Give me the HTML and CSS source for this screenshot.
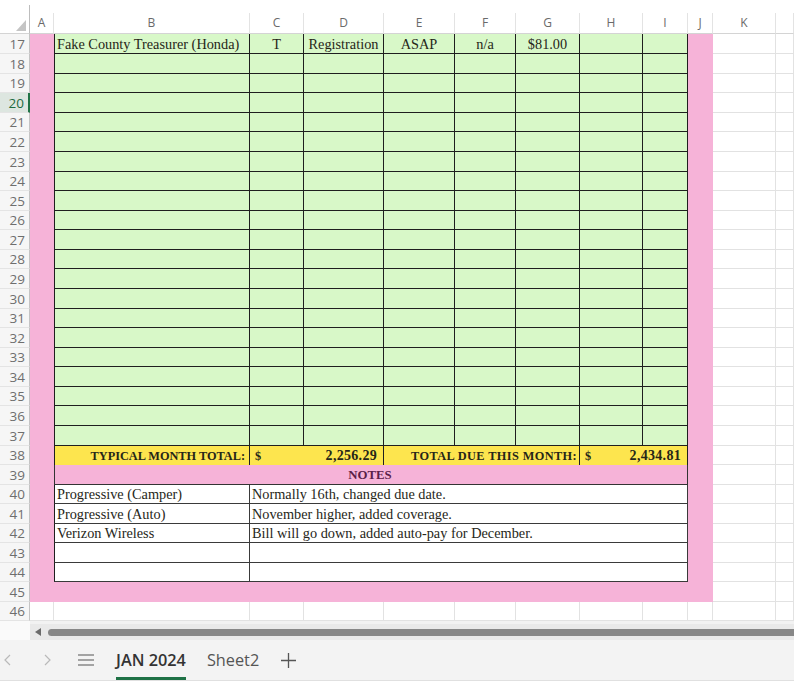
FILE: index.html
```html
<!DOCTYPE html>
<html>
<head>
<meta charset="utf-8">
<link rel="stylesheet" href="styles.css">
</head>
<body>
<div class="sheet">
  <div class="row hdr">
    <div class="corner"><svg width="10" height="11" viewBox="0 0 10 11"><polygon points="10,0 10,11 0,11" fill="#c4c4c4"/></svg></div>
    <div class="ch">A</div><div class="ch">B</div><div class="ch">C</div><div class="ch">D</div><div class="ch">E</div><div class="ch">F</div><div class="ch">G</div><div class="ch">H</div><div class="ch">I</div><div class="ch">J</div><div class="ch">K</div><div class="ch"></div>
  </div>

  <div class="row"><div class="rh">17</div><div class="pk"></div><div class="g gl">Fake County Treasurer (Honda)</div><div class="g ctr">T</div><div class="g ctr">Registration</div><div class="g ctr">ASAP</div><div class="g ctr">n/a</div><div class="g ctr">$81.00</div><div class="g"></div><div class="g"></div><div class="pk"></div><div class="w"></div><div class="w"></div></div>
  <div class="row"><div class="rh">18</div><div class="pk"></div><div class="g gl"></div><div class="g"></div><div class="g"></div><div class="g"></div><div class="g"></div><div class="g"></div><div class="g"></div><div class="g"></div><div class="pk"></div><div class="w"></div><div class="w"></div></div>
  <div class="row s"><div class="rh">19</div><div class="pk"></div><div class="g gl"></div><div class="g"></div><div class="g"></div><div class="g"></div><div class="g"></div><div class="g"></div><div class="g"></div><div class="g"></div><div class="pk"></div><div class="w"></div><div class="w"></div></div>
  <div class="row"><div class="rh sel">20</div><div class="pk"></div><div class="g gl"></div><div class="g"></div><div class="g"></div><div class="g"></div><div class="g"></div><div class="g"></div><div class="g"></div><div class="g"></div><div class="pk"></div><div class="w"></div><div class="w"></div></div>
  <div class="row s"><div class="rh">21</div><div class="pk"></div><div class="g gl"></div><div class="g"></div><div class="g"></div><div class="g"></div><div class="g"></div><div class="g"></div><div class="g"></div><div class="g"></div><div class="pk"></div><div class="w"></div><div class="w"></div></div>
  <div class="row"><div class="rh">22</div><div class="pk"></div><div class="g gl"></div><div class="g"></div><div class="g"></div><div class="g"></div><div class="g"></div><div class="g"></div><div class="g"></div><div class="g"></div><div class="pk"></div><div class="w"></div><div class="w"></div></div>
  <div class="row"><div class="rh">23</div><div class="pk"></div><div class="g gl"></div><div class="g"></div><div class="g"></div><div class="g"></div><div class="g"></div><div class="g"></div><div class="g"></div><div class="g"></div><div class="pk"></div><div class="w"></div><div class="w"></div></div>
  <div class="row s"><div class="rh">24</div><div class="pk"></div><div class="g gl"></div><div class="g"></div><div class="g"></div><div class="g"></div><div class="g"></div><div class="g"></div><div class="g"></div><div class="g"></div><div class="pk"></div><div class="w"></div><div class="w"></div></div>
  <div class="row"><div class="rh">25</div><div class="pk"></div><div class="g gl"></div><div class="g"></div><div class="g"></div><div class="g"></div><div class="g"></div><div class="g"></div><div class="g"></div><div class="g"></div><div class="pk"></div><div class="w"></div><div class="w"></div></div>
  <div class="row s"><div class="rh">26</div><div class="pk"></div><div class="g gl"></div><div class="g"></div><div class="g"></div><div class="g"></div><div class="g"></div><div class="g"></div><div class="g"></div><div class="g"></div><div class="pk"></div><div class="w"></div><div class="w"></div></div>
  <div class="row"><div class="rh">27</div><div class="pk"></div><div class="g gl"></div><div class="g"></div><div class="g"></div><div class="g"></div><div class="g"></div><div class="g"></div><div class="g"></div><div class="g"></div><div class="pk"></div><div class="w"></div><div class="w"></div></div>
  <div class="row s"><div class="rh">28</div><div class="pk"></div><div class="g gl"></div><div class="g"></div><div class="g"></div><div class="g"></div><div class="g"></div><div class="g"></div><div class="g"></div><div class="g"></div><div class="pk"></div><div class="w"></div><div class="w"></div></div>
  <div class="row"><div class="rh">29</div><div class="pk"></div><div class="g gl"></div><div class="g"></div><div class="g"></div><div class="g"></div><div class="g"></div><div class="g"></div><div class="g"></div><div class="g"></div><div class="pk"></div><div class="w"></div><div class="w"></div></div>
  <div class="row"><div class="rh">30</div><div class="pk"></div><div class="g gl"></div><div class="g"></div><div class="g"></div><div class="g"></div><div class="g"></div><div class="g"></div><div class="g"></div><div class="g"></div><div class="pk"></div><div class="w"></div><div class="w"></div></div>
  <div class="row s"><div class="rh">31</div><div class="pk"></div><div class="g gl"></div><div class="g"></div><div class="g"></div><div class="g"></div><div class="g"></div><div class="g"></div><div class="g"></div><div class="g"></div><div class="pk"></div><div class="w"></div><div class="w"></div></div>
  <div class="row"><div class="rh">32</div><div class="pk"></div><div class="g gl"></div><div class="g"></div><div class="g"></div><div class="g"></div><div class="g"></div><div class="g"></div><div class="g"></div><div class="g"></div><div class="pk"></div><div class="w"></div><div class="w"></div></div>
  <div class="row s"><div class="rh">33</div><div class="pk"></div><div class="g gl"></div><div class="g"></div><div class="g"></div><div class="g"></div><div class="g"></div><div class="g"></div><div class="g"></div><div class="g"></div><div class="pk"></div><div class="w"></div><div class="w"></div></div>
  <div class="row"><div class="rh">34</div><div class="pk"></div><div class="g gl"></div><div class="g"></div><div class="g"></div><div class="g"></div><div class="g"></div><div class="g"></div><div class="g"></div><div class="g"></div><div class="pk"></div><div class="w"></div><div class="w"></div></div>
  <div class="row s"><div class="rh">35</div><div class="pk"></div><div class="g gl"></div><div class="g"></div><div class="g"></div><div class="g"></div><div class="g"></div><div class="g"></div><div class="g"></div><div class="g"></div><div class="pk"></div><div class="w"></div><div class="w"></div></div>
  <div class="row"><div class="rh">36</div><div class="pk"></div><div class="g gl"></div><div class="g"></div><div class="g"></div><div class="g"></div><div class="g"></div><div class="g"></div><div class="g"></div><div class="g"></div><div class="pk"></div><div class="w"></div><div class="w"></div></div>
  <div class="row"><div class="rh">37</div><div class="pk"></div><div class="g gl"></div><div class="g"></div><div class="g"></div><div class="g"></div><div class="g"></div><div class="g"></div><div class="g"></div><div class="g"></div><div class="pk"></div><div class="w"></div><div class="w"></div></div>

  <div class="row s"><div class="rh">38</div><div class="pk"></div>
    <div class="y gl rt">TYPICAL MONTH TOTAL:</div>
    <div class="y acct span2"><span>$</span><span class="num">2,256.29</span></div>
    <div class="y rt span3 pr2 wide">TOTAL DUE THIS MONTH:</div>
    <div class="y acct span2"><span>$</span><span class="num">2,434.81</span></div>
    <div class="pk"></div><div class="w"></div><div class="w"></div></div>
  <div class="row"><div class="rh">39</div><div class="pk"></div><div class="nt span8">NOTES</div><div class="pk"></div><div class="w"></div><div class="w"></div></div>
  <div class="row s"><div class="rh">40</div><div class="pk"></div><div class="wn gl">Progressive (Camper)</div><div class="wn span7">Normally 16th, changed due date.</div><div class="pk"></div><div class="w"></div><div class="w"></div></div>
  <div class="row"><div class="rh">41</div><div class="pk"></div><div class="wn gl">Progressive (Auto)</div><div class="wn span7">November higher, added coverage.</div><div class="pk"></div><div class="w"></div><div class="w"></div></div>
  <div class="row s"><div class="rh">42</div><div class="pk"></div><div class="wn gl">Verizon Wireless</div><div class="wn span7">Bill will go down, added auto-pay for December.</div><div class="pk"></div><div class="w"></div><div class="w"></div></div>
  <div class="row"><div class="rh">43</div><div class="pk"></div><div class="wn gl"></div><div class="wn span7"></div><div class="pk"></div><div class="w"></div><div class="w"></div></div>
  <div class="row s"><div class="rh">44</div><div class="pk"></div><div class="wn gl"></div><div class="wn span7"></div><div class="pk"></div><div class="w"></div><div class="w"></div></div>
  <div class="row"><div class="rh">45</div><div class="pk span10"></div><div class="w"></div><div class="w"></div></div>
  <div class="row s"><div class="rh">46</div><div class="w"></div><div class="w"></div><div class="w"></div><div class="w"></div><div class="w"></div><div class="w"></div><div class="w"></div><div class="w"></div><div class="w"></div><div class="w"></div><div class="w"></div><div class="w"></div></div>
</div>

<div class="hscroll">
  <div class="hs-pad"></div>
  <div class="track">
    <svg class="arrow" width="6" height="8" viewBox="0 0 6 8"><polygon points="6,0 6,8 0,4" fill="#6b6b6b"/></svg>
    <div class="thumb"></div>
  </div>
</div>

<div class="tabs">
  <svg class="nav prev" width="7" height="12" viewBox="0 0 7 12"><polyline points="6,1 1,6 6,11" fill="none" stroke="#b9b9b9" stroke-width="1.2"/></svg>
  <svg class="nav next" width="7" height="12" viewBox="0 0 7 12"><polyline points="1,1 6,6 1,11" fill="none" stroke="#b9b9b9" stroke-width="1.2"/></svg>
  <svg class="menu" width="16" height="12" viewBox="0 0 16 12"><path d="M0 1H16M0 6H16M0 11H16" stroke="#555" stroke-width="1.2"/></svg>
  <div class="tab active">JAN 2024</div>
  <div class="tab">Sheet2</div>
  <svg class="add" width="15" height="15" viewBox="0 0 15 15"><path d="M7.5 0V15M0 7.5H15" stroke="#555" stroke-width="1.3"/></svg>
</div>
</body>
</html>
```

FILE: styles.css
```css
* { box-sizing: border-box; margin: 0; padding: 0; }
html, body { background: #ffffff; }
body {
  width: 794px;
  height: 689px;
  overflow: hidden;
  font-family: "Liberation Serif", serif;
  color: #262618;
}

.sheet { display: flex; flex-direction: column; }

.row {
  display: grid;
  grid-template-columns: 30px 24px 196px 54px 80px 71px 61px 64px 63px 45px 25px 63px 18px;
  height: 20px;
}
.row.s { height: 19px; }
.row > div {
  display: flex;
  align-items: flex-end;
  overflow: hidden;
  white-space: nowrap;
  font-size: 14.3px;
  line-height: 16px;
  padding: 0 2px 1px 2px;
}

/* header */
.row.hdr { height: 34px; align-items: end; }
.row.hdr > .corner {
  height: 29px;
  border-right: 1px solid #bdbdbd;
  border-bottom: 1px solid #d4d4d4;
  justify-content: flex-end;
  padding: 0 3px 2px 0;
}
.row.hdr > .ch {
  height: 21px;
  justify-content: center;
  align-items: center;
  font-family: "Open Sans", "Liberation Sans", sans-serif;
  font-size: 12px;
  color: #6a6a6a;
  border-right: 1px solid #e3e3e3;
  border-bottom: 1px solid #d4d4d4;
  padding: 0;
}

/* row headers */
.row > .rh {
  background: #f6f6f6;
  border-right: 1px solid #c4c4c4;
  border-bottom: 1px solid #e4e4e4;
  justify-content: flex-end;
  align-items: center;
  padding: 0 4px 0 0;
  font-family: "Open Sans", "Liberation Sans", sans-serif;
  font-size: 13.5px;
  color: #6e6e6e;
}
.row > .rh.sel {
  background: #dde6e0;
  color: #1d6b40;
  border-right: 2px solid #217346;
}

.pk { background: #f6b3d8; }
.span2 { grid-column: span 2; }
.span3 { grid-column: span 3; }
.span7 { grid-column: span 7; }
.span8 { grid-column: span 8; }
.span10 { grid-column: span 10; }

.g {
  background: #d8f8c8;
  border-right: 1px solid #1f1f1f;
  border-bottom: 1px solid #1f1f1f;
}
.gl { border-left: 1px solid #1f1f1f; }
.row > .ctr { justify-content: center; }

.w {
  background: #ffffff;
  border-right: 1px solid #e2e2e2;
  border-bottom: 1px solid #e2e2e2;
}

.y {
  background: #fde54e;
  border-right: 1px solid #1f1f1f;
  font-weight: bold;
}
.row > .y { font-size: 12.3px; }
.row > .rt { justify-content: flex-end; padding-right: 4px; }
.row > .pr2 { padding-right: 2px; }
.row > .wide { letter-spacing: 0.4px; }
.row > .acct { justify-content: space-between; padding: 0 6px 1px 5px; }
.num { font-size: 14px; letter-spacing: 0.3px; }

.row > .nt {
  background: #f6b3d8;
  border-left: 1px solid #333333;
  border-right: 1px solid #333333;
  border-bottom: 1px solid #333333;
  justify-content: center;
  font-weight: bold;
  font-size: 12.8px;
  color: #5a2049;
  padding-left: 0;
}

.wn {
  background: #ffffff;
  border-right: 1px solid #3a3a3a;
  border-bottom: 1px solid #3a3a3a;
}

/* horizontal scrollbar */
.hscroll {
  display: flex;
  height: 19px;
}
.hs-pad { width: 30px; background: #fafafa; }
.track {
  flex: 1;
  display: flex;
  align-items: center;
  background: #e9e9e9;
  border-top: 3px solid #f2f2f2;
  padding-left: 5px;
}
.arrow { margin-right: 7px; }
.thumb {
  flex: 1;
  height: 7px;
  background: #878787;
  border-radius: 4px 0 0 4px;
}

/* sheet tabs */
.tabs {
  display: flex;
  align-items: center;
  height: 41px;
  background: #f3f3f3;
  border-bottom: 1px solid #e0e0e0;
  font-family: "Open Sans", "Liberation Sans", sans-serif;
  font-size: 16.3px;
  padding-left: 4px;
}
.nav.next { margin-left: 33px; }
.menu { margin-left: 27px; }
.tab {
  align-self: stretch;
  display: flex;
  align-items: center;
  color: #555555;
  border-bottom: 3px solid transparent;
  padding-top: 3px;
}
.tab.active {
  margin-left: 22px;
  color: #333333;
  font-weight: 600;
  border-bottom-color: #1e7145;
}
.tab + .tab { margin-left: 21px; }
.add { margin-left: 22px; }
```
